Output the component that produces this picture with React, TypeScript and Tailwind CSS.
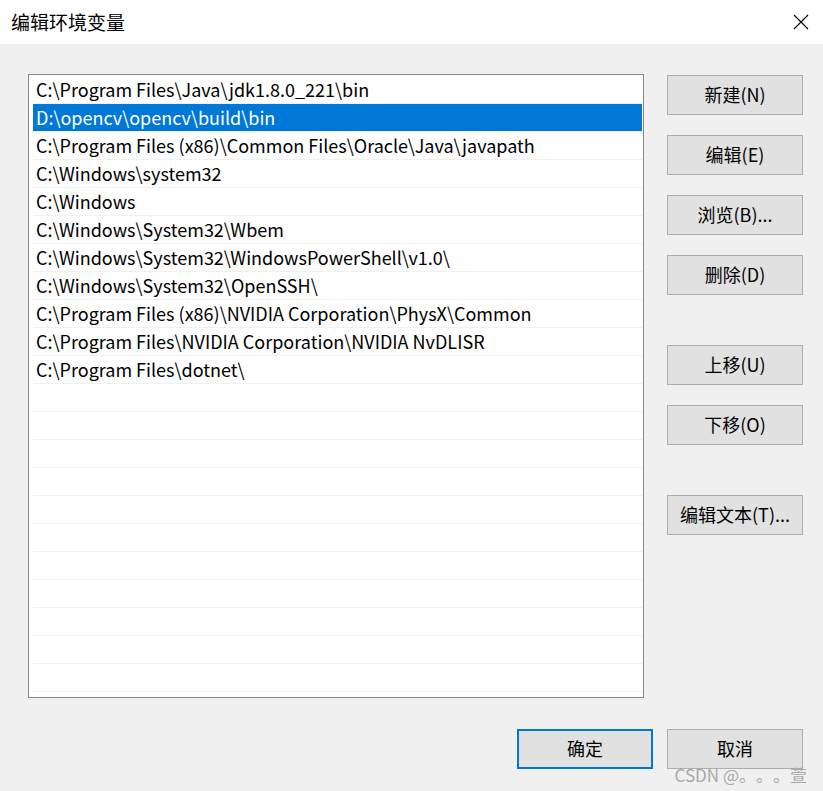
import React from "react";

const paths = [
  "C:\\Program Files\\Java\\jdk1.8.0_221\\bin",
  "D:\\opencv\\opencv\\build\\bin",
  "C:\\Program Files (x86)\\Common Files\\Oracle\\Java\\javapath",
  "C:\\Windows\\system32",
  "C:\\Windows",
  "C:\\Windows\\System32\\Wbem",
  "C:\\Windows\\System32\\WindowsPowerShell\\v1.0\\",
  "C:\\Windows\\System32\\OpenSSH\\",
  "C:\\Program Files (x86)\\NVIDIA Corporation\\PhysX\\Common",
  "C:\\Program Files\\NVIDIA Corporation\\NVIDIA NvDLISR",
  "C:\\Program Files\\dotnet\\",
];

const rows = [...paths, ...Array(22 - paths.length).fill("")];

const Btn = ({
  label,
  className = "",
  primary = false,
}: {
  label: string;
  className?: string;
  primary?: boolean;
}) => (
  <button
    className={
      "flex h-[40px] w-[136px] items-center justify-center bg-[#e1e1e1] pb-[1px] text-[18px] text-black " +
      (primary ? "border-2 border-[#0078d7] " : "border border-[#adadad] ") +
      className
    }
  >
    {label}
  </button>
);

export default function App() {
  return (
    <div
      className="flex h-[791px] w-[823px] flex-col overflow-hidden bg-[#f0f0f0]"
      style={{ fontFamily: '"Noto Sans CJK SC", "Noto Sans", sans-serif' }}
    >
      {/* title bar */}
      <div className="flex h-[44px] shrink-0 items-center justify-between bg-white pl-[11px] pr-[14px]">
        <span className="text-[19px] text-black">编辑环境变量</span>
        <svg width="16" height="16" viewBox="0 0 16 16">
          <path d="M1 1 L15 15 M15 1 L1 15" stroke="#000" strokeWidth="1.1" />
        </svg>
      </div>

      <div className="flex pl-[28px] pt-[30px]">
        {/* list */}
        <div className="h-[624px] w-[616px] border border-[#828790] bg-white pl-[4px] pr-[1px] pt-[1px]">
          {rows.map((p, i) => (
            <div
              key={i}
              className={
                "flex h-[28px] items-center border-b border-[#f0f0f0] pb-[2px] pl-[3px] text-[18px] leading-none " +
                (i === 1 ? "bg-[#0078d7] text-white" : "text-black")
              }
            >
              {p}
            </div>
          ))}
        </div>

        {/* side buttons */}
        <div className="ml-[23px] flex flex-col pt-[1px]">
          <Btn label="新建(N)" />
          <Btn label="编辑(E)" className="mt-[20px]" />
          <Btn label="浏览(B)..." className="mt-[20px]" />
          <Btn label="删除(D)" className="mt-[20px]" />
          <Btn label="上移(U)" className="mt-[50px]" />
          <Btn label="下移(O)" className="mt-[20px]" />
          <Btn label="编辑文本(T)..." className="mt-[50px]" />
        </div>
      </div>

      {/* bottom buttons */}
      <div className="mt-[31px] flex justify-end gap-[14px] pr-[20px]">
        <Btn label="确定" primary />
        <Btn label="取消" />
      </div>

      <div className="mt-[-3px] flex justify-end pr-[16px]">
        <span className="text-[17px] leading-[18px] text-[#a8a8a8] [text-spacing-trim:space-all]">
          CSDN @。。。萱
        </span>
      </div>
    </div>
  );
}
